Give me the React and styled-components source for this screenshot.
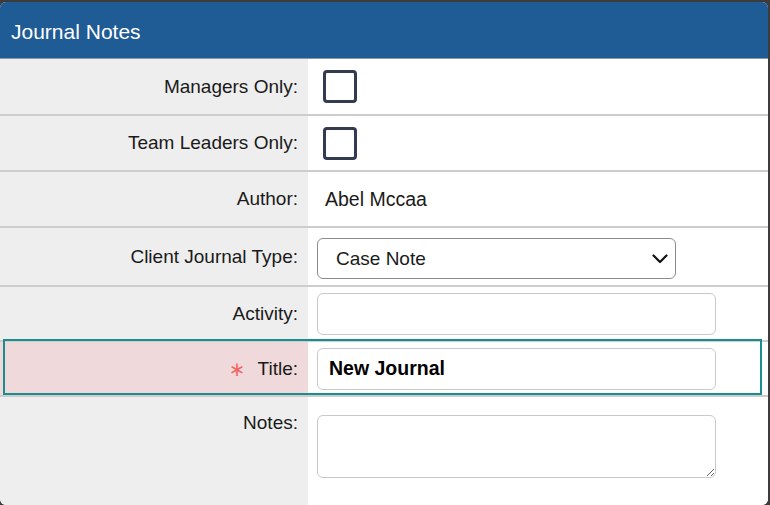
import React from 'react';
import styled, { createGlobalStyle } from 'styled-components';

const Global = createGlobalStyle`
  html, body {
    margin: 0;
    padding: 0;
    background: #3c3c3c;
    font-family: "Liberation Sans", Arial, Helvetica, sans-serif;
  }
`;

const Card = styled.div`
  width: 768px;
  height: 503px;
  margin-top: 2px;
  display: flex;
  flex-direction: column;
  background: #eeeeee;
  border-radius: 6px;
  overflow: hidden;
`;

const Header = styled.div`
  height: 57px;
  box-sizing: border-box;
  display: flex;
  align-items: center;
  padding: 3px 0 0 11px;
  background: #1f5b94;
  border-bottom: 1px solid #8c97a3;
  color: #fff;
  font-size: 21px;
`;

const Row = styled.div`
  position: relative;
  display: grid;
  grid-template-columns: 308px 1fr;
  height: ${(p) => (p.$h ? `${p.$h}px` : 'auto')};
  flex: ${(p) => (p.$grow ? 1 : 'none')};
  border-bottom: ${(p) => (p.$grow ? 'none' : '2px solid #cdcdcd')};

  ${(p) =>
    p.$focus &&
    `
    &::after {
      content: '';
      position: absolute;
      left: 3px;
      right: 6px;
      top: -3px;
      bottom: 0;
      border: 2.5px solid #188e8f;
      pointer-events: none;
    }
  `}
`;

const Label = styled.div`
  display: flex;
  justify-content: flex-end;
  align-items: ${(p) => (p.$top ? 'flex-start' : 'center')};
  padding: ${(p) => (p.$top ? '15px 10px 0 0' : '0 10px 0 0')};
  background: ${(p) => (p.$required ? '#f0d9db' : '#eeeeee')};
  color: #1a1a1a;
  font-size: 19px;
`;

const Star = styled.span`
  color: #f06868;
  margin-right: 12px;
  font-size: 20px;
  font-family: "DejaVu Sans", sans-serif;
`;

const Value = styled.div`
  display: flex;
  align-items: ${(p) => (p.$top ? 'flex-start' : 'center')};
  padding: ${(p) => (p.$top ? '18px 9px 0' : `0 9px 0 ${p.$indent || 9}px`)};
  background: #fff;
  color: #1a1a1a;
  font-size: 19.5px;
`;

const Check = styled.input.attrs({ type: 'checkbox' })`
  appearance: none;
  margin: 0 0 0 6px;
  width: 34px;
  height: 33px;
  border: 3px solid #323c4e;
  border-radius: 4px;
  background: #fff;
`;

const SelectWrap = styled.div`
  position: relative;
  width: 359px;
  margin-top: 3px;
`;

const Select = styled.select`
  appearance: none;
  width: 100%;
  height: 41px;
  padding: 0 40px 0 18px;
  border: 1px solid #8c8c8c;
  border-radius: 6px;
  background: #fff;
  color: #1a1a1a;
  font-family: inherit;
  font-size: 19px;
`;

const Chevron = styled.svg`
  position: absolute;
  right: 8px;
  top: 16px;
  pointer-events: none;
`;

const TextInput = styled.input`
  box-sizing: border-box;
  width: 399px;
  height: 42px;
  padding: 0 11px;
  border: 1px solid #c9c9c9;
  border-radius: 6px;
  background: #fff;
  color: #000;
  font-family: inherit;
  font-size: 19.5px;
  font-weight: ${(p) => (p.$bold ? 700 : 400)};
  outline: none;
`;

const Notes = styled.textarea`
  box-sizing: border-box;
  width: 399px;
  height: 63px;
  border: 1px solid #c9c9c9;
  border-radius: 6px;
  background: #fff;
  font-family: inherit;
  font-size: 18px;
`;

export default function App() {
  return (
    <>
      <Global />
      <Card>
        <Header>Journal Notes</Header>

        <Row $h={55}>
          <Label>Managers Only:</Label>
          <Value><Check /></Value>
        </Row>

        <Row $h={54}>
          <Label>Team Leaders Only:</Label>
          <Value><Check /></Value>
        </Row>

        <Row $h={54}>
          <Label>Author:</Label>
          <Value $indent={17}>Abel Mccaa</Value>
        </Row>

        <Row $h={57}>
          <Label>Client Journal Type:</Label>
          <Value>
            <SelectWrap>
              <Select defaultValue="case">
                <option value="case">Case Note</option>
              </Select>
              <Chevron width="16" height="10" viewBox="0 0 16 10">
                <path d="M1.5 1.5 L8 8 L14.5 1.5" fill="none" stroke="#111" strokeWidth="2.2" strokeLinecap="round" strokeLinejoin="round" />
              </Chevron>
            </SelectWrap>
          </Value>
        </Row>

        <Row $h={53}>
          <Label>Activity:</Label>
          <Value><TextInput /></Value>
        </Row>

        <Row $h={53} $focus>
          <Label $required><Star>∗</Star>Title:</Label>
          <Value><TextInput $bold defaultValue="New Journal" /></Value>
        </Row>

        <Row $grow>
          <Label $top>Notes:</Label>
          <Value $top><Notes /></Value>
        </Row>
      </Card>
    </>
  );
}
